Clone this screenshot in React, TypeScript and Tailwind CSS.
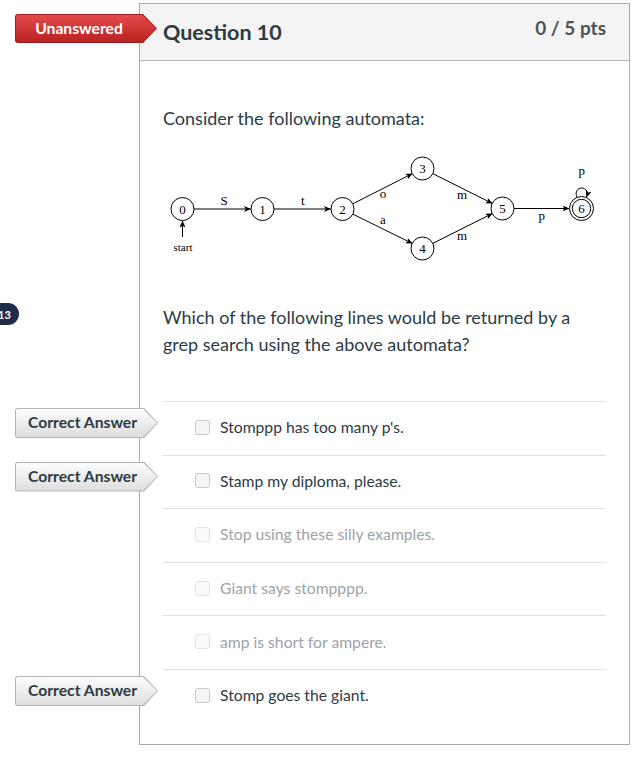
import React from "react";

const arrowClip =
  "polygon(0 0, calc(100% - 14px) 0, 100% 50%, calc(100% - 14px) 100%, 0 100%)";

function CorrectBadge() {
  return (
    <div
      className="absolute left-[-148px] top-[6px] h-[30px] w-[143px] rounded-l-[3px] bg-[#b4b4b4]"
      style={{ clipPath: arrowClip }}
    >
      <div
        className="absolute inset-[1px] rounded-l-[2px] bg-gradient-to-b from-[#fdfdfd] to-[#dedede] flex items-center pl-[12px]"
        style={{ clipPath: arrowClip }}
      >
        <span className="text-[15.7px] font-bold text-[#2d3b45] leading-none">Correct Answer</span>
      </div>
    </div>
  );
}

type Ans = { text: string; correct: boolean; muted: boolean };

const answers: Ans[] = [
  { text: "Stomppp has too many p's.", correct: true, muted: false },
  { text: "Stamp my diploma, please.", correct: true, muted: false },
  { text: "Stop using these silly examples.", correct: false, muted: true },
  { text: "Giant says stompppp.", correct: false, muted: true },
  { text: "amp is short for ampere.", correct: false, muted: true },
  { text: "Stomp goes the giant.", correct: true, muted: false },
];

const serif = "'Liberation Serif', 'DejaVu Serif', serif";

function State({ x, y, label, final }: { x: number; y: number; label: string; final?: boolean }) {
  return (
    <g>
      <circle cx={x} cy={y} r={final ? 12 : 11.5} fill="#fff" stroke="#000" strokeWidth={1} />
      {final && <circle cx={x} cy={y} r={9.2} fill="none" stroke="#000" strokeWidth={1} />}
      <text x={x} y={y + 4.5} textAnchor="middle" fontSize="13" fontFamily={serif}>
        {label}
      </text>
    </g>
  );
}

function Automaton() {
  return (
    <svg width="445" height="115" viewBox="163 150 445 115" className="block">
      <defs>
        <marker id="ah" markerWidth="7" markerHeight="6" refX="6.5" refY="3" orient="auto" markerUnits="userSpaceOnUse">
          <path d="M0,0 L7,3 L0,6 L1.8,3 z" fill="#000" />
        </marker>
      </defs>
      <g stroke="#000" strokeWidth="1" fill="none">
        <line x1="194" y1="209" x2="250.5" y2="209" markerEnd="url(#ah)" />
        <line x1="274" y1="209" x2="330.5" y2="209" markerEnd="url(#ah)" />
        <line x1="352.8" y1="203.8" x2="412.2" y2="173.7" markerEnd="url(#ah)" />
        <line x1="352.8" y1="214.1" x2="412.2" y2="243.4" markerEnd="url(#ah)" />
        <line x1="432.8" y1="173.6" x2="492.2" y2="203.4" markerEnd="url(#ah)" />
        <line x1="432.8" y1="243.4" x2="492.2" y2="213.6" markerEnd="url(#ah)" />
        <line x1="514" y1="208.5" x2="569" y2="208.5" markerEnd="url(#ah)" />
        <line x1="182.5" y1="237" x2="182.5" y2="221" markerEnd="url(#ah)" />
        <path d="M 577 197.3 C 572 185, 591 185, 586.5 197" markerEnd="url(#ah)" />
      </g>
      <State x={182.5} y={209} label="0" />
      <State x={262.5} y={209} label="1" />
      <State x={342.5} y={209} label="2" />
      <State x={422.5} y={168.5} label="3" />
      <State x={422.5} y={248.5} label="4" />
      <State x={502.5} y={208.5} label="5" />
      <State x={581.5} y={208.5} label="6" final />
      <g fontFamily={serif} fontSize="13" textAnchor="middle" fill="#000">
        <text x="224" y="205">S</text>
        <text x="302.7" y="205">t</text>
        <text x="383" y="198">o</text>
        <text x="383" y="224">a</text>
        <text x="462" y="199">m</text>
        <text x="462" y="240">m</text>
        <text x="541.7" y="220">p</text>
        <text x="581.7" y="175">p</text>
        <text x="183" y="251" fontSize="11">start</text>
      </g>
    </svg>
  );
}

export default function App() {
  return (
    <div className="relative w-[642px] h-[759px] bg-white overflow-hidden font-['Lato','Noto_Sans',sans-serif] text-[#2d3b45]">
      {/* Unanswered badge */}
      <div
        className="absolute left-[15px] top-[14px] z-10 h-[29px] w-[142px] rounded-l-[3px] bg-[#a11d1d]"
        style={{ clipPath: arrowClip }}
      >
        <div
          className="absolute inset-[1px] rounded-l-[2px] bg-gradient-to-b from-[#e5494a] to-[#b92222] flex items-center justify-center pr-[14px]"
          style={{ clipPath: arrowClip }}
        >
          <span className="text-[15.7px] font-bold text-white leading-none">Unanswered</span>
        </div>
      </div>

      {/* question number pill */}
      <div className="absolute left-[-10px] top-[303px] h-[22px] w-[29px] rounded-full bg-[#1e2d4b] flex items-center justify-center">
        <span className="text-[11px] font-bold text-white leading-none">13</span>
      </div>

      <div className="ml-[139px] mt-[3px] w-[491px] border border-[#a9a9a9] h-[742px]">
        <div className="h-[57px] bg-[#f4f4f4] border-b border-[#b8b8b8] flex justify-between items-start px-[23px]">
          <div className="pt-[15px] text-[21.5px] font-bold leading-[26px] text-[#2d3b45]">Question 10</div>
          <div className="pt-[12px] text-[19px] font-bold leading-[23px] text-[#4d5258]">0 / 5 pts</div>
        </div>
        <div className="px-[23px] pt-[44px]">
          <p className="text-[18px] leading-[27px]">Consider the following automata:</p>
          <div className="mt-[18px]">
            <Automaton />
          </div>
          <p className="mt-[39px] text-[18px] leading-[27px]">
            Which of the following lines would be returned by a grep search using the above automata?
          </p>
          <div className="mt-[43px]">
            {answers.map((a, i) => (
              <div key={i} className="relative h-[53.6px] border-t border-[#dfe2e4] flex items-center pl-[32px] pb-[2px]">
                {a.correct && <CorrectBadge />}
                <span
                  className={
                    "inline-block w-[15px] h-[15px] rounded-[3px] border " +
                    (a.muted ? "border-[#e2e2e2] bg-[#fafafa]" : "border-[#c9c9c9] bg-[#f5f5f5]")
                  }
                />
                <span
                  className={
                    "ml-[10px] text-[15.7px] leading-[20px] " + (a.muted ? "text-[#9ea3a7]" : "text-[#2d3b45]")
                  }
                >
                  {a.text}
                </span>
              </div>
            ))}
          </div>
        </div>
      </div>
    </div>
  );
}
